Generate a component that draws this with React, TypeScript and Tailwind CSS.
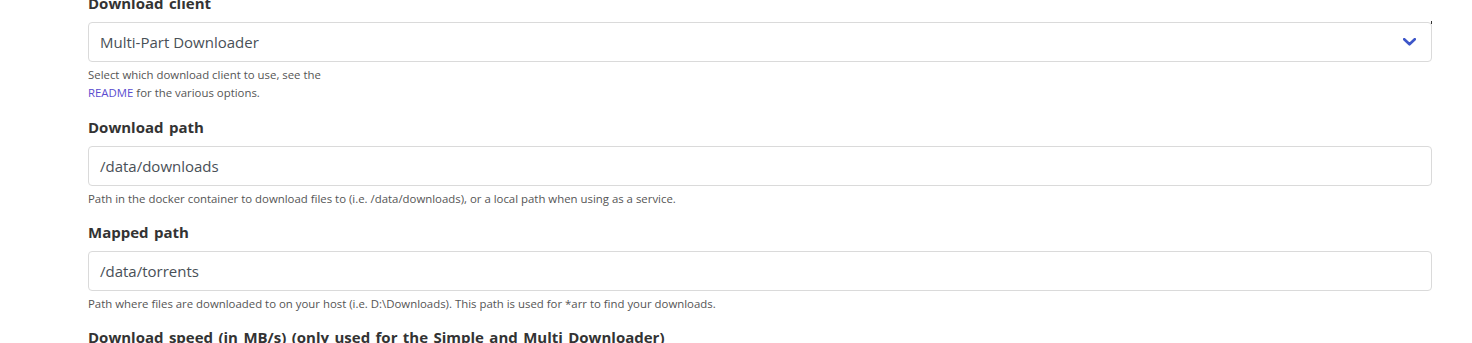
import React from 'react';

const font = { fontFamily: '"Open Sans", "Noto Sans", sans-serif' };

function Label({ children }: { children: React.ReactNode }) {
  return <div className="text-[15px] leading-5 font-bold text-[#333] [word-spacing:1.5px]">{children}</div>;
}

function Help({ children }: { children: React.ReactNode }) {
  return <div className="mt-1 text-[11.4px] leading-[18px] text-[#555]">{children}</div>;
}

function TextField({ value }: { value: string }) {
  return (
    <div className="mt-[9px] h-10 flex items-center pl-[11px] pr-3 border border-[#dadada] rounded-[4px] bg-white text-[15px] text-[#495057]">
      {value}
    </div>
  );
}

export default function App() {
  return (
    <div className="w-[1472px] h-[343px] overflow-hidden bg-white" style={font}>
      <div className="ml-[88px] w-[1344px] -mt-[7px]">
        <Label>Download client</Label>
        <div className="relative mt-[9px] h-10 flex items-center justify-between pl-[11px] pr-[15px] border border-[#dadada] rounded-[4px] bg-white text-[15px] text-[#495057]">
          <span>Multi-Part Downloader</span>
          <svg width="13" height="8" viewBox="0 0 13 8" fill="none">
            <polyline points="1.2,1.2 6.5,6.3 11.8,1.2" stroke="#3d56c9" strokeWidth="2.6" strokeLinecap="round" strokeLinejoin="round" />
          </svg>
          <span className="absolute -right-px -top-[2px] w-px h-[3px] bg-[#333]" />
        </div>
        <Help>
          Select which download client to use, see the
          <br />
          <a className="text-[#5b4ccf]">README</a> for the various options.
        </Help>

        <div className="mt-[15px]">
          <Label>Download path</Label>
          <TextField value="/data/downloads" />
          <Help>
            Path in the docker container to download files to (i.e. /data/downloads), or a local path when using as a service.
          </Help>
        </div>

        <div className="mt-[14px]">
          <Label>Mapped path</Label>
          <TextField value="/data/torrents" />
          <Help>
            Path where files are downloaded to on your host (i.e. D:\Downloads). This path is used for *arr to find your downloads.
          </Help>
        </div>

        <div className="mt-[14px]">
          <Label>Download speed (in MB/s) (only used for the Simple and Multi Downloader)</Label>
        </div>
      </div>
    </div>
  );
}
